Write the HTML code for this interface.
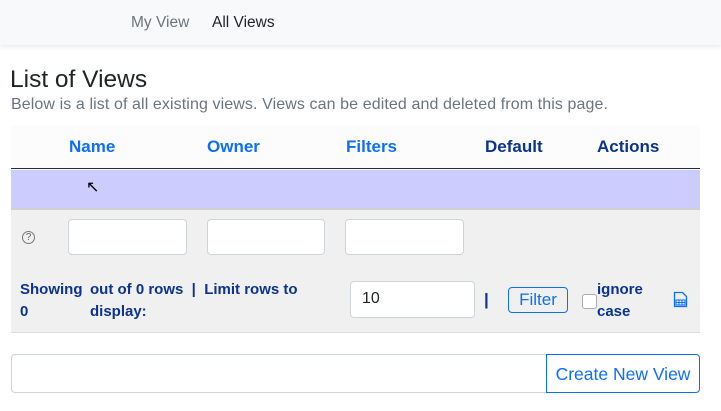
<!DOCTYPE html>
<html><head><style>
*{box-sizing:border-box;margin:0;padding:0}
body{width:721px;height:411px;background:#fff;font-family:"Liberation Sans",sans-serif;position:relative;overflow:hidden}
.a{position:absolute;white-space:nowrap}
.nav{position:absolute;left:0;top:0;width:721px;height:45px;background:#f8f9fa;box-shadow:0 2px 4px rgba(0,0,0,.08)}
.th{font-weight:bold;font-size:17px;color:#0d6efd;top:137px}
.inp{position:absolute;background:#fff;border:1px solid #ced4da;border-radius:4px}
.nb{color:#0b3391;font-weight:bold;font-size:15px;line-height:22px}
</style></head><body>
<div class="nav"></div>
<div class="a" style="left:131px;top:14px;font-size:15.5px;color:#6c757d">My View</div>
<div class="a" style="left:212px;top:14px;font-size:15.5px;color:#212529">All Views</div>
<div class="a" style="left:10px;top:66px;font-size:24.5px;color:#212529">List of Views</div>
<div class="a" style="left:11px;top:96px;font-size:16px;color:#6c757d;letter-spacing:0.1px">Below is a list of all existing views. Views can be edited and deleted from this page.</div>
<div class="a" style="left:11px;top:125px;width:689px;height:44px;background:#fcfcfc;border-bottom:1px solid #1a2a6c"></div>
<div class="a th" style="left:69px">Name</div>
<div class="a th" style="left:207px">Owner</div>
<div class="a th" style="left:346px">Filters</div>
<div class="a th" style="left:485px;color:#0b3391">Default</div>
<div class="a th" style="left:597px;color:#0b3391">Actions</div>
<div class="a" style="left:11px;top:170px;width:689px;height:38px;background:#ccccff"></div>
<div class="a" style="left:86px;top:177px;font-size:16px">&#8598;</div>
<div class="a" style="left:11px;top:208px;width:689px;height:125px;background:#f0f0f0;border-top:2px solid #d0d0d0;border-bottom:1px solid #dcdcdc"></div>
<div class="a" style="left:22px;top:231px;width:13px;height:13px;border:1px solid #777;border-radius:50%;font-size:10px;line-height:11px;text-align:center;color:#666">?</div>
<div class="inp" style="left:68px;top:219px;width:119px;height:36px"></div>
<div class="inp" style="left:207px;top:219px;width:118px;height:36px"></div>
<div class="inp" style="left:345px;top:219px;width:119px;height:36px"></div>
<div class="a nb" style="left:20px;top:279px">Showing<br>0</div>
<div class="a nb" style="left:90px;top:279px">out of 0 rows &nbsp;| &nbsp;Limit rows to<br>display:</div>
<div class="inp" style="left:350px;top:281px;width:125px;height:37px;font-size:16px;padding:8px 11px;color:#212529">10</div>
<div class="a nb" style="left:484px;top:289px;font-size:17px">|</div>
<div class="a" style="left:508px;top:287px;width:60px;height:26px;border:1px solid #0d6efd;border-radius:4px;color:#0d6efd;font-size:17px;text-align:center;line-height:24px">Filter</div>
<div class="a" style="left:582px;top:294px;width:15px;height:15px;border:1px solid #aaa;border-radius:3px;background:#fff"></div>
<div class="a nb" style="left:597px;top:279px">ignore<br>case</div>
<svg class="a" style="left:673px;top:291px" width="15" height="17" viewBox="0 0 15 17"><path d="M1.5 1.5h8l4 4v10h-12z" fill="none" stroke="#0d6efd" stroke-width="1.3"/><path d="M3 9h9v5H3zM3 11.5h9M6 9v5M9 9v5" fill="none" stroke="#0d6efd" stroke-width="1"/></svg>
<div class="a" style="left:11px;top:354px;width:536px;height:39px;border:1px solid #ced4da;border-right:none;border-radius:4px 0 0 4px"></div>
<div class="a" style="left:546px;top:354px;width:154px;height:39px;border:1px solid #0d6efd;border-radius:0 4px 4px 0;color:#0d6efd;font-size:17.5px;text-align:center;line-height:39px">Create New View</div>
</body></html>
